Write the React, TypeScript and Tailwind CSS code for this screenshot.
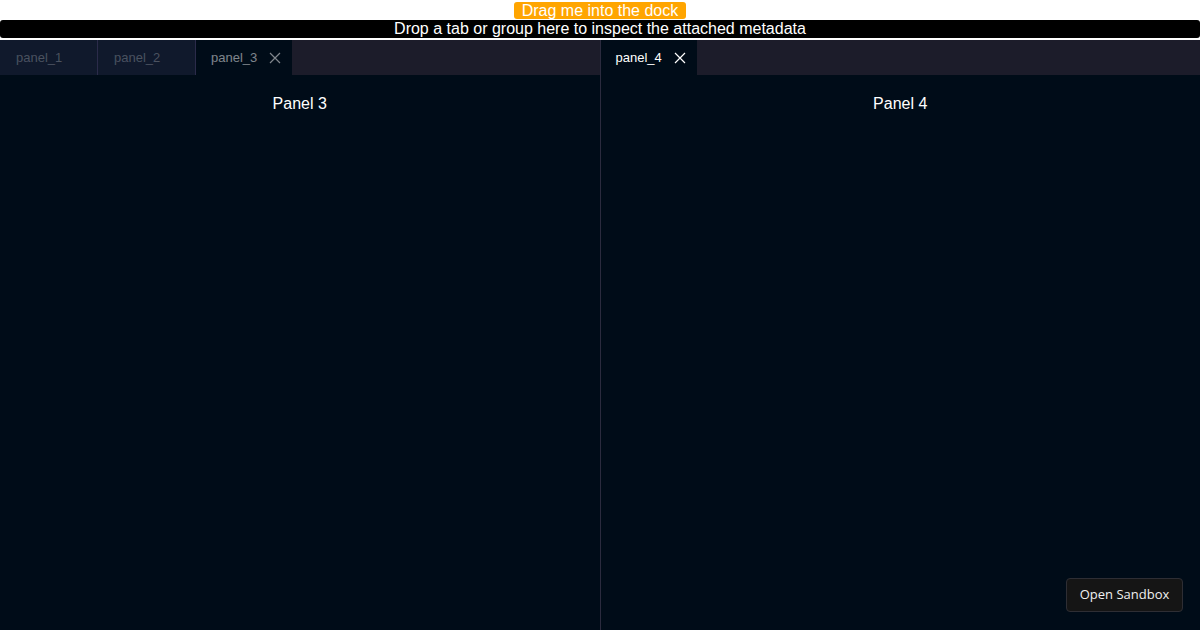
type Tab = {
  id: string
  active: boolean
}

function CloseIcon() {
  return (
    <svg width="12" height="12" viewBox="0 0 12 12" fill="none" stroke="currentColor" strokeWidth="1.2">
      <path d="M1 1L11 11M11 1L1 11" />
    </svg>
  )
}

function DockTab({ tab, groupActive }: { tab: Tab; groupActive: boolean }) {
  // colours follow the abyss dock theme
  const color = tab.active
    ? groupActive
      ? "text-white"
      : "text-white/50"
    : groupActive
      ? "text-white/50"
      : "text-white/25"
  const box = tab.active
    ? "w-[96px] pl-[15px] bg-[#000c18]"
    : "w-[98px] pl-4 bg-[#10192c] border-r border-[#2b2b4a]"

  return (
    <div className={`h-full shrink-0 flex items-center ${box} ${color}`}>
      <span className="text-[13px] leading-none">{tab.id}</span>
      <span className="ml-auto mr-[11px] w-[12px] h-[12px] flex items-center justify-center">
        {tab.active && <CloseIcon />}
      </span>
    </div>
  )
}

function DockGroup({ tabs, title, groupActive }: { tabs: Tab[]; title: string; groupActive: boolean }) {
  return (
    <div className="flex-1 min-w-0 flex flex-col bg-[#000c18]">
      <div className="h-[35px] shrink-0 flex bg-[#1c1c2a]">
        {tabs.map((t) => (
          <DockTab key={t.id} tab={t} groupActive={groupActive} />
        ))}
      </div>
      <div className="flex-1 flex justify-center pt-[20px] text-white text-base leading-[18px]">
        {title}
      </div>
    </div>
  )
}

export default function App() {
  return (
    <div className="w-[1200px] h-[630px] bg-white flex flex-col overflow-hidden font-['Liberation_Sans',Arial,sans-serif]">
      {/* Drag source */}
      <div className="flex justify-center mt-[2px]">
        <div className="h-[17px] px-2 rounded-[3px] bg-[#ffa500] text-white text-base leading-[17px]">
          Drag me into the dock
        </div>
      </div>

      {/* Drop target */}
      <div className="mt-[1px] h-[18px] rounded-[3px] bg-black text-white text-base leading-[18px] text-center">
        Drop a tab or group here to inspect the attached metadata
      </div>

      {/* Dock */}
      <div className="mt-[2px] flex-1 flex relative">
        <DockGroup
          groupActive={false}
          title="Panel 3"
          tabs={[
            { id: "panel_1", active: false },
            { id: "panel_2", active: false },
            { id: "panel_3", active: true },
          ]}
        />
        <div className="w-px bg-[#2b2b3e] shrink-0" />
        <DockGroup groupActive={true} title="Panel 4" tabs={[{ id: "panel_4", active: true }]} />

        <button className="absolute right-[17px] bottom-[18px] h-[34px] w-[117px] rounded-[4px] bg-[#151515] border border-[#2e2e34] text-[#f0f0f0] text-[13px] font-medium font-['Open_Sans',sans-serif]">
          Open Sandbox
        </button>
      </div>
    </div>
  )
}
